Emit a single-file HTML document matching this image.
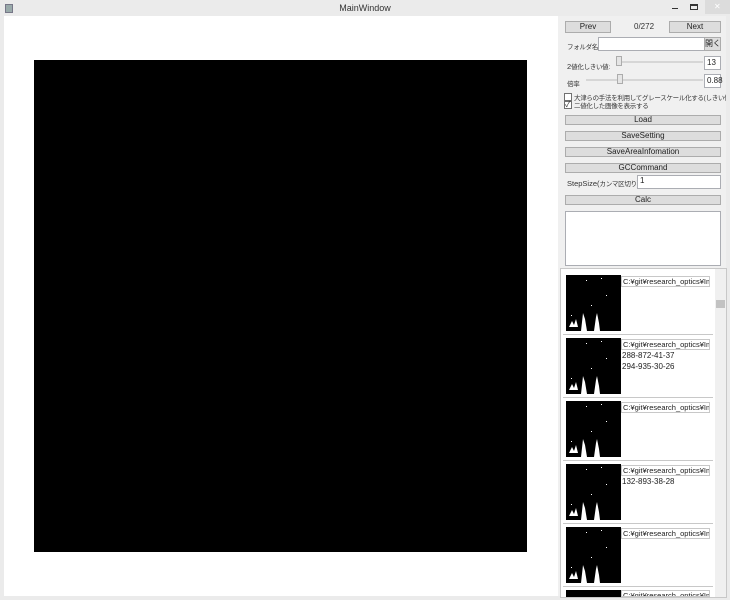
<!DOCTYPE html>
<html><head><meta charset="utf-8"><style>
*{margin:0;padding:0;box-sizing:border-box}
body{width:730px;height:600px;background:#ebebeb;position:relative;overflow:hidden;font-family:"Liberation Sans","Noto Sans CJK JP",sans-serif;font-size:8px;color:#333}
.a{position:absolute;white-space:nowrap}
.j{font-size:6.5px;letter-spacing:-0.3px}
.l{font-size:7.5px;letter-spacing:0}
.btn{position:absolute;background:#dddddd;border:1px solid #acacac;text-align:center;font-size:8px;line-height:8px;color:#222;white-space:nowrap}
.tb{position:absolute;background:#fff;border:1px solid #abadb3;font-size:8px;color:#222;padding-left:2px}
.thumb{position:absolute;left:566px;width:55px;height:56px;background:#000;overflow:hidden}
.path{position:absolute;left:621px;width:89px;height:11px;border:1px solid #c8c8c8;background:#fff;font-size:7.5px;line-height:9px;white-space:nowrap;overflow:hidden;color:#222;padding-left:1px}
.sep{position:absolute;left:563px;width:150px;height:1px;background:#c8c8c8}
.num{position:absolute;left:622px;font-size:8px;color:#222}
</style></head><body>
<div class="a" style="left:5px;top:4px;width:8px;height:9px;background:#9aa;border:1px solid #778"></div>
<div class="a" style="left:0;top:3px;width:730px;text-align:center;font-size:9px;color:#333">MainWindow</div>
<div class="a" style="left:672px;top:8px;width:6px;height:1px;background:#333"></div>
<div class="a" style="left:690px;top:4px;width:8px;height:6px;border:1px solid #333;border-top-width:2px"></div>
<div class="a" style="left:705px;top:0px;width:25px;height:14px;background:#dcdcdc"></div>
<div class="a" style="left:714px;top:2px;font-size:8px;color:#fff">✕</div>
<div class="a" style="left:4px;top:16px;width:554px;height:580px;background:#fff"></div>
<div class="a" style="left:558px;top:16px;width:168px;height:580px;background:#f0f0f0"></div>
<div class="a" style="left:34px;top:60px;width:493px;height:492px;background:#000"></div>

<div class="btn" style="left:565px;top:21px;width:46px;height:12px;line-height:10px">Prev</div>
<div class="a" style="left:634px;top:22px;font-size:8px">0/272</div>
<div class="btn" style="left:669px;top:21px;width:52px;height:12px;line-height:10px">Next</div>

<div class="a j" style="left:567px;top:41px">フォルダ名:</div>
<div class="tb" style="left:598px;top:37px;width:107px;height:14px"></div>
<div class="btn j" style="left:704px;top:37px;width:17px;height:14px;line-height:12px">開く</div>

<div class="a j" style="left:567px;top:61px"><span class="l">2</span>値化しきい値:</div>
<div class="a" style="left:618px;top:61px;width:85px;height:2px;background:#d6d6d6"></div>
<div class="a" style="left:616px;top:56px;width:6px;height:10px;background:#e5e5e5;border:1px solid #acacac"></div>
<div class="tb" style="left:704px;top:56px;width:17px;height:14px;line-height:12px">13</div>

<div class="a j" style="left:567px;top:78px">倍率</div>
<div class="a" style="left:586px;top:79px;width:117px;height:2px;background:#d6d6d6"></div>
<div class="a" style="left:617px;top:74px;width:6px;height:10px;background:#e5e5e5;border:1px solid #acacac"></div>
<div class="tb" style="left:704px;top:74px;width:17px;height:14px;line-height:12px">0.88</div>

<div class="a" style="left:564px;top:93px;width:8px;height:8px;background:#fff;border:1px solid #707070"></div>
<div class="a j" style="left:574px;top:92px;width:152px;overflow:hidden">大津らの手法を利用してグレースケール化する(しきい値は無</div>
<div class="a" style="left:564px;top:101px;width:8px;height:8px;background:#fff;border:1px solid #707070;font-size:8px;line-height:6px">✓</div>
<div class="a j" style="left:574px;top:100px">二値化した画像を表示する</div>

<div class="btn" style="left:565px;top:115px;width:156px;height:10px">Load</div>
<div class="btn" style="left:565px;top:131px;width:156px;height:10px">SaveSetting</div>
<div class="btn" style="left:565px;top:147px;width:156px;height:10px">SaveAreaInfomation</div>
<div class="btn" style="left:565px;top:163px;width:156px;height:10px">GCCommand</div>
<div class="a j" style="left:567px;top:178px"><span class="l">StepSize(</span>カンマ区切り<span class="l">):</span></div>
<div class="tb" style="left:637px;top:175px;width:84px;height:14px;line-height:10px">1</div>
<div class="btn" style="left:565px;top:195px;width:156px;height:10px">Calc</div>
<div class="tb" style="left:565px;top:211px;width:156px;height:55px"></div>

<div class="a" style="left:560px;top:268px;width:167px;height:330px;background:#fff;border:1px solid #c8c8c8"></div>
<div class="a" style="left:715px;top:269px;width:11px;height:328px;background:#f0f0f0"></div>
<div class="a" style="left:716px;top:300px;width:9px;height:8px;background:#c2c2c2"></div>

<svg width="0" height="0" style="position:absolute"><defs><g id="blob"><path d="M3 52 L6 46 L8 50 L10 44 L12 52Z M15 56 L17 38 L19 44 L21 56Z M28 56 L30 42 L31 38 L33 48 L34 56Z M5 40h1v1h-1z M20 5h1v1h-1z M35 3h1v1h-1z M25 30h1v1h-1z M40 20h1v1h-1z" fill="#fff"/></g></defs></svg>

<div class="thumb" style="top:275px"><svg width="55" height="56"><use href="#blob"/></svg></div>
<div class="path" style="top:276px">C:¥git¥research_optics¥Ima</div>
<div class="sep" style="top:334px"></div>
<div class="thumb" style="top:338px"><svg width="55" height="56"><use href="#blob"/></svg></div>
<div class="path" style="top:339px">C:¥git¥research_optics¥Ima</div>
<div class="num" style="top:351px">288-872-41-37</div>
<div class="num" style="top:362px">294-935-30-26</div>
<div class="sep" style="top:397px"></div>
<div class="thumb" style="top:401px"><svg width="55" height="56"><use href="#blob"/></svg></div>
<div class="path" style="top:402px">C:¥git¥research_optics¥Ima</div>
<div class="sep" style="top:460px"></div>
<div class="thumb" style="top:464px"><svg width="55" height="56"><use href="#blob"/></svg></div>
<div class="path" style="top:465px">C:¥git¥research_optics¥Ima</div>
<div class="num" style="top:477px">132-893-38-28</div>
<div class="sep" style="top:523px"></div>
<div class="thumb" style="top:527px"><svg width="55" height="56"><use href="#blob"/></svg></div>
<div class="path" style="top:528px">C:¥git¥research_optics¥Ima</div>
<div class="sep" style="top:586px"></div>
<div class="thumb" style="top:590px;height:7px"></div>
<div class="path" style="top:590px;height:7px">C:¥git¥research_optics¥Ima</div>
</body></html>
